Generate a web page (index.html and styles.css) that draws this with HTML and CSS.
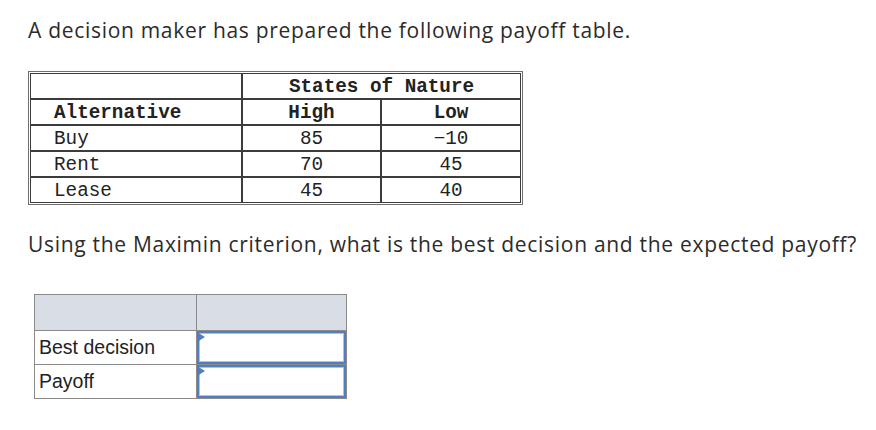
FILE: index.html
```html
<!DOCTYPE html>
<html>
<head>
<meta charset="utf-8">
<link rel="stylesheet" href="styles.css">
</head>
<body>
<p class="q">A decision maker has prepared the following payoff table.</p>
<table class="payoff">
  <colgroup><col class="c1"><col class="c2"><col class="c3"></colgroup>
  <tr><td></td><th colspan="2" class="center">States of Nature</th></tr>
  <tr><th class="left">Alternative</th><th class="center">High</th><th class="center">Low</th></tr>
  <tr><td class="left">Buy</td><td class="center">85</td><td class="center">&minus;10</td></tr>
  <tr><td class="left">Rent</td><td class="center">70</td><td class="center">45</td></tr>
  <tr><td class="left">Lease</td><td class="center">45</td><td class="center">40</td></tr>
</table>
<p class="q q2">Using the Maximin criterion, what is the best decision and the expected payoff?</p>
<table class="answer">
  <tr class="head"><td class="a1"></td><td class="a2"></td></tr>
  <tr><td class="a1">Best decision</td><td class="a2"><div class="drop"><span class="tri"></span></div></td></tr>
  <tr><td class="a1">Payoff</td><td class="a2"><div class="drop"><span class="tri"></span></div></td></tr>
</table>
</body>
</html>
```
FILE: styles.css
```css
body {
  margin: 0;
  padding: 14px 0 0 28px;
  font-family: "Open Sans", "Liberation Sans", sans-serif;
  color: #2b2b2b;
}
.q {
  margin: 0;
  font-size: 21px;
  letter-spacing: 0.7px;
  line-height: 32px;
}
.payoff {
  margin-top: 25px;
  border-collapse: separate;
  border-spacing: 0;
  border: 1px solid #6f6f6f;
  padding: 1px;
  width: 495px;
  font-family: "Liberation Mono", monospace;
  font-size: 19.3px;
  color: #222;
}
.payoff col.c1 { width: 212px; }
.payoff col.c2 { width: 139px; }
.payoff td, .payoff th {
  border: 1px solid #3c3c3c;
  height: 23px;
  padding: 1px 0 0;
  line-height: 22px;
  vertical-align: middle;
}
.payoff th { font-weight: bold; }
.payoff .left { text-align: left; padding-left: 23px; }
.payoff .center { text-align: center; }
.q2 {
  margin-top: 23px;
  margin-bottom: 0;
}
.answer {
  margin-top: 34px;
  margin-left: 6px;
  border-collapse: collapse;
  font-family: "Liberation Sans", Arial, sans-serif;
  font-size: 19.5px;
  color: #222;
}
.answer td {
  border: 1px solid #8a8a8a;
  padding: 0;
}
.answer .head td {
  background: #d9dde5;
  height: 35px;
}
.answer .a1 {
  width: 157px;
  padding-left: 4px;
  height: 33px;
}
.answer .a2 { width: 149px; }
.drop {
  position: relative;
  height: 29px;
  border: 2px solid #4f7ec2;
  box-shadow: inset 0 0 0 1px #a9c3e6;
  background: #fff;
  margin: 0;
}
.tri {
  position: absolute;
  left: -2px;
  top: -1px;
  width: 0;
  height: 0;
  border-top: 5px solid transparent;
  border-bottom: 5px solid transparent;
  border-left: 8px solid #4f7ec2;
}
```
